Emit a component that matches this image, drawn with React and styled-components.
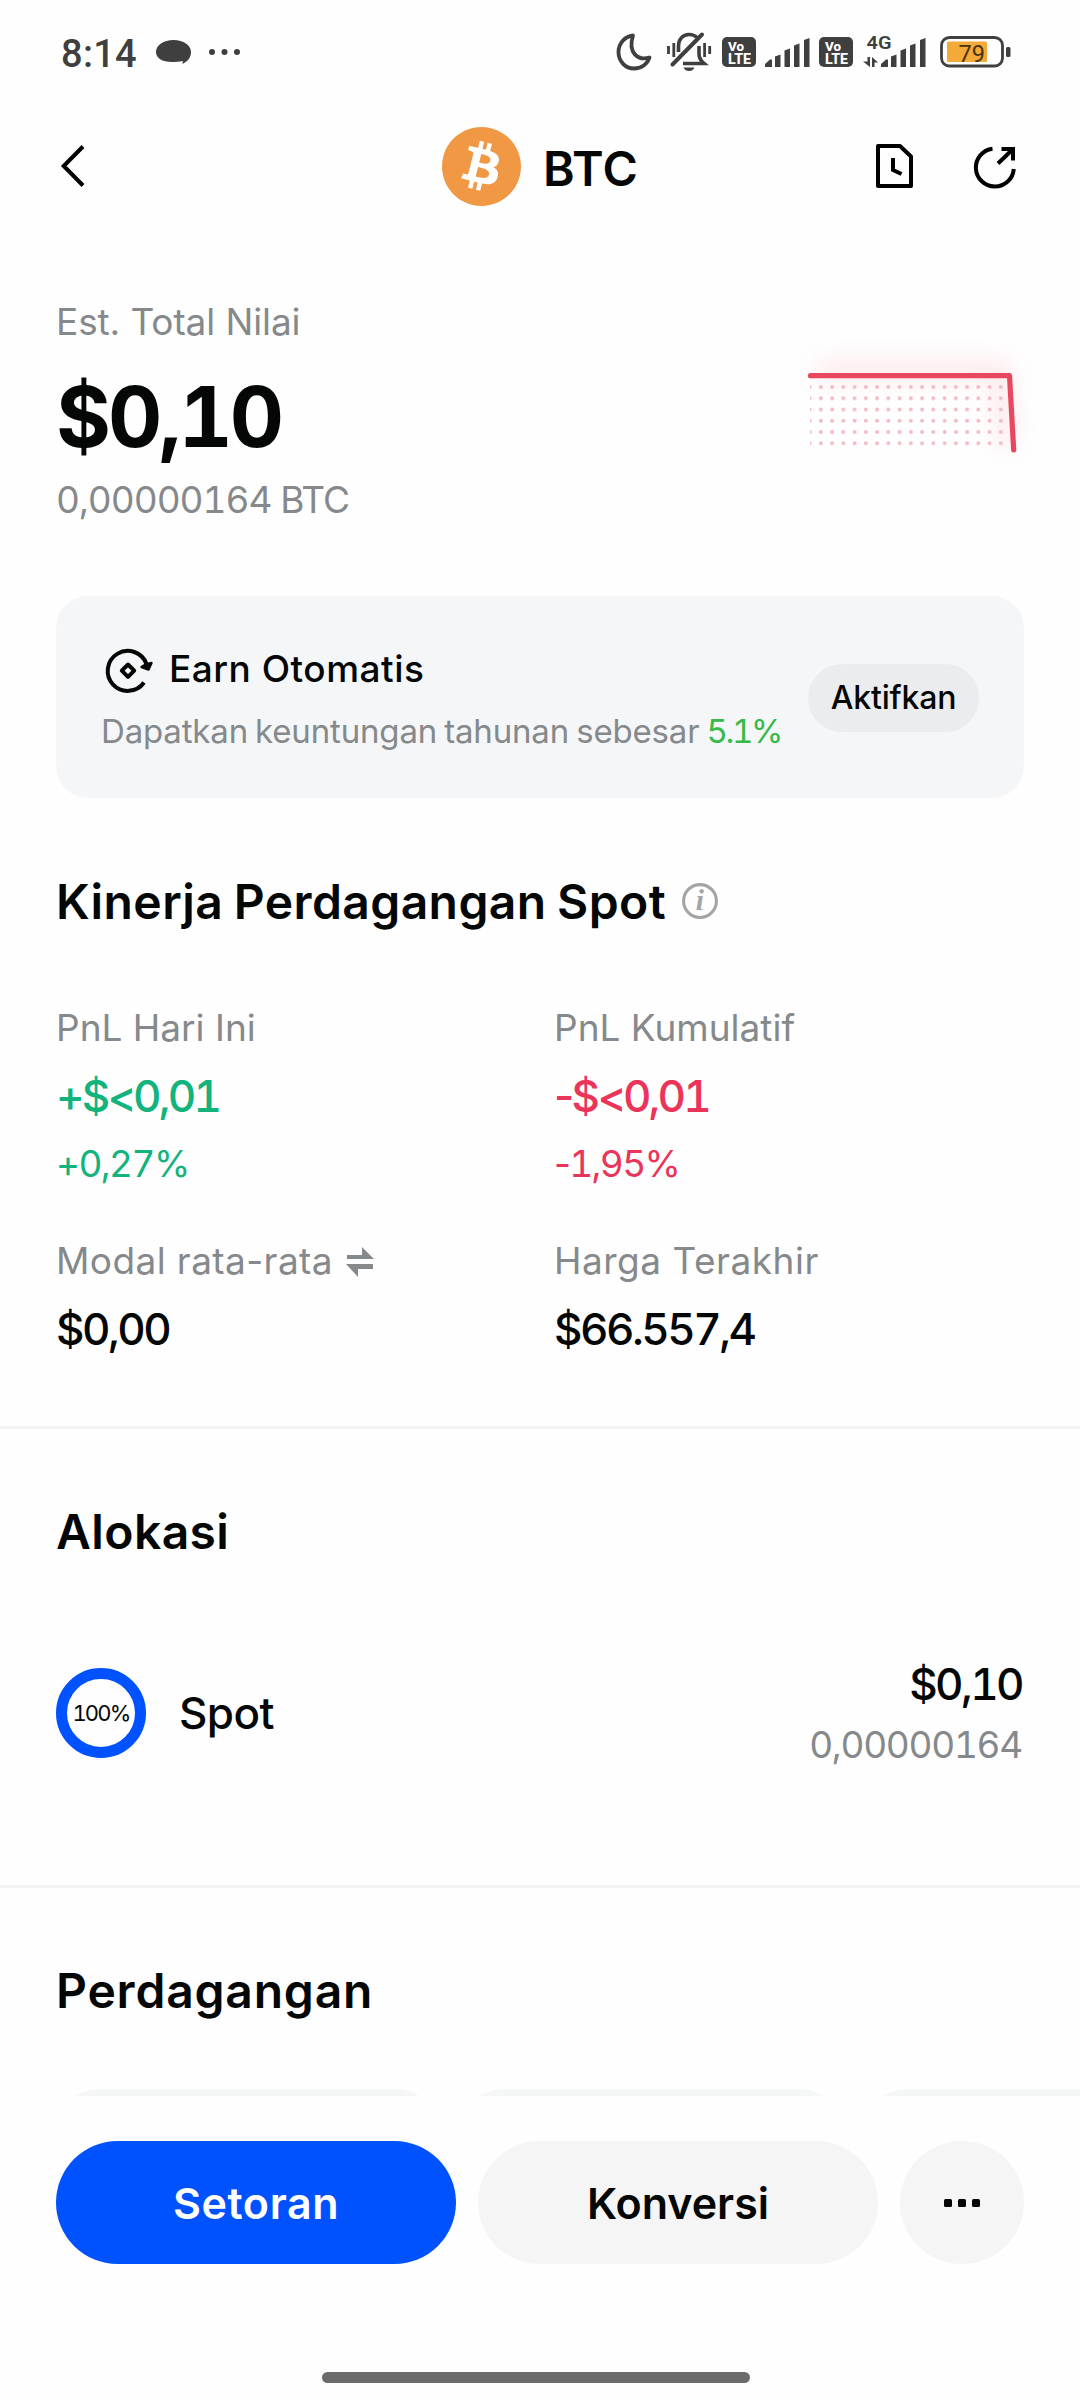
import React from "react";
import styled, { createGlobalStyle } from "styled-components";
import { SiBitcoin } from "react-icons/si";

const colors = {
  text: "#050707",
  muted: "#86898b",
  status: "#3f3f3f",
  up: "#12b37c",
  down: "#ea3459",
  blue: "#0052ff",
  line: "#f3f3f3",
  pill: "#f5f5f5"
};

const GlobalStyle = createGlobalStyle`
  * {
    box-sizing: border-box;
  }

  body {
    margin: 0;
    background: #fefefe;
    color: ${colors.text};
    font-family: Inter, "Liberation Sans", sans-serif;
  }

  svg {
    display: block;
    flex: none;
    overflow: visible;
  }

  button {
    padding: 0;
    border: none;
    background: none;
    color: inherit;
    font: inherit;
    cursor: pointer;
  }
`;

const Screen = styled.div`
  display: flex;
  flex-direction: column;
  width: 1080px;
  height: 2400px;
  overflow: hidden;
`;

const StatusBar = styled.div`
  display: flex;
  align-items: center;
  justify-content: space-between;
  flex: none;
  height: 104px;
  padding: 0 69px 0 61px;
  font-family: Roboto, sans-serif;
  color: ${colors.status};
`;

const StatusGroup = styled.div`
  display: flex;
  align-items: center;
`;

const StatusItem = styled.div`
  margin-left: ${props => props.$gap}px;
`;

const Clock = styled.span`
  font-size: 38px;
  font-weight: 500;
  line-height: 44px;
  letter-spacing: 0.3px;
  padding-top: 3px;
`;

const Header = styled.header`
  display: grid;
  grid-template-columns: 1fr auto 1fr;
  align-items: center;
  flex: none;
  height: 124px;
  padding: 0 64px 0 61px;
`;

const HeaderTitle = styled.div`
  display: flex;
  align-items: center;
  gap: 22px;
  padding-left: 3px;
`;

const CoinName = styled.span`
  padding-top: 5px;
  font-size: 48px;
  font-weight: 600;
  line-height: 60px;
  letter-spacing: 0.2px;
`;

const CoinLogo = styled(SiBitcoin)`
  width: 79px;
  height: 79px;
  border-radius: 50%;
  color: #f09843;
`;

const HeaderActions = styled.div`
  display: flex;
  align-items: center;
  justify-content: flex-end;
  gap: 61px;
`;

const IconButton = styled.button`
  display: flex;
  justify-self: start;
`;

const Body = styled.main`
  flex: 1;
  min-height: 0;
  overflow: hidden;
`;

const Section = styled.section`
  padding: ${props => props.$top}px 56px ${props => props.$bottom || 0}px;
`;

const Divider = styled.div`
  height: 3px;
  background: ${colors.line};
`;

const Label = styled.div`
  display: flex;
  align-items: center;
  gap: 13px;
  font-size: 37px;
  line-height: 50px;
  letter-spacing: ${props => props.$spacing || 0}px;
  color: ${colors.muted};
`;

const Value = styled.div`
  font-size: 44px;
  font-weight: 500;
  line-height: 56px;
  letter-spacing: ${props => props.$spacing || 0}px;
  font-variant-numeric: tabular-nums;
  color: ${props => props.$color || colors.text};
`;

const SmallValue = styled.div`
  font-size: 37px;
  line-height: 50px;
  letter-spacing: ${props => props.$spacing}px;
  font-variant-numeric: tabular-nums;
  color: ${props => props.$color || colors.muted};
`;

const Sign = styled.span`
  font-variant-numeric: normal;
`;

const Title = styled.h2`
  display: flex;
  align-items: center;
  gap: 15px;
  margin: ${props => props.$top || 0}px 0 0;
  font-size: 48px;
  font-weight: 600;
  line-height: 64px;
  letter-spacing: ${props => props.$spacing}px;
  word-spacing: -2px;
`;

const Balance = styled.div`
  display: flex;
  justify-content: space-between;
  align-items: flex-start;
`;

const BalanceAmount = styled.div`
  margin: 20px 0 8px;
  font-size: 84px;
  font-weight: 700;
  line-height: 100px;
  letter-spacing: -3.1px;
  font-variant-numeric: tabular-nums;
`;

const ChartBox = styled.div`
  margin-top: 28px;
`;

const EarnCard = styled.div`
  display: flex;
  align-items: flex-start;
  justify-content: space-between;
  height: 202px;
  margin-top: 71px;
  padding: 48px 45px 0;
  border-radius: 32px;
  background: #f4f6f8;
`;

const EarnTitle = styled.div`
  display: flex;
  align-items: center;
  gap: 12px;
  font-size: 37px;
  font-weight: 500;
  line-height: 50px;
  letter-spacing: 0.5px;
`;

const EarnText = styled.div`
  margin-top: 14px;
  font-size: 33px;
  line-height: 46px;
  letter-spacing: -0.17px;
  word-spacing: -2px;
  white-space: nowrap;
  color: ${colors.muted};
`;

const Rate = styled.span`
  color: #36b948;
  letter-spacing: -2.4px;
  font-variant-numeric: tabular-nums;
`;

const EnableButton = styled.button`
  width: 171px;
  height: 68px;
  margin-top: 20px;
  padding-bottom: 1px;
  border-radius: 34px;
  background: #ebecee;
  font-size: 32px;
  font-weight: 500;
  letter-spacing: -0.2px;
`;

const Stats = styled.div`
  display: grid;
  grid-template-columns: 498px 1fr;
  row-gap: 47px;
  margin-top: 69px;
`;

const Stat = styled.div`
  display: flex;
  flex-direction: column;
  gap: 15px;
`;

const Allocation = styled.div`
  display: flex;
  align-items: center;
  height: 114px;
  margin-top: 92px;
`;

const Ring = styled.div`
  display: flex;
  align-items: center;
  justify-content: center;
  width: 90px;
  height: 90px;
  margin-right: 33px;
  border: 11px solid ${colors.blue};
  border-radius: 50%;
  font-size: 22px;
  letter-spacing: -1.8px;
  font-variant-numeric: tabular-nums;
`;

const AllocationAmount = styled.div`
  display: flex;
  flex-direction: column;
  align-items: flex-end;
  gap: 8px;
  margin-left: auto;
  padding-right: 2px;
`;

const TradeCards = styled.div`
  display: flex;
  gap: 21px;
  margin-top: 66px;
`;

const TradeCard = styled.div`
  flex: none;
  width: 383px;
  height: 180px;
  border-radius: 44px;
  background: #f5f7f7;
`;

const Footer = styled.footer`
  flex: none;
  height: 304px;
  padding: 45px 56px 0;
`;

const FooterActions = styled.div`
  display: flex;
  gap: 22px;
`;

const FooterButton = styled.button`
  display: flex;
  align-items: center;
  justify-content: center;
  flex: ${props => (props.$round ? "none" : 1)};
  width: ${props => (props.$round ? "124px" : "auto")};
  height: 123px;
  border-radius: 62px;
  background: ${props => (props.$primary ? colors.blue : colors.pill)};
  color: ${props => (props.$primary ? "#fff" : colors.text)};
  font-size: 43px;
  font-weight: 600;
  letter-spacing: ${props => props.$spacing || 0}px;
`;

const HomeBar = styled.div`
  width: 428px;
  height: 11px;
  margin: 108px 0 0 266px;
  border-radius: 6px;
  background: #6b6b6b;
`;

function BubbleIcon() {
  return (
    <svg width="35" height="24" viewBox="0 0 35 24" fill={colors.status}>
      <path d="M17.500 0C27.500 0 35 5 35 12c0 5-2.500 9-8.500 12l.300-3C23 21.800 20 22 16 22 6 22 0 18 0 12 0 5 7.500 0 17.500 0Z" />
    </svg>
  );
}

function DotsIcon() {
  return (
    <svg width="32" height="6" viewBox="0 0 32 6" fill={colors.status}>
      <circle cx="3" cy="3" r="3" />
      <circle cx="15.500" cy="3" r="3" />
      <circle cx="28" cy="3" r="3" />
    </svg>
  );
}

function MoonIcon() {
  return (
    <svg width="36" height="38" viewBox="0 0 36 38" fill="none" stroke={colors.status} strokeWidth="3.800" strokeLinejoin="round">
      <path d="M17 2.500C8.500 3.500 2.500 10.500 2.500 19c0 9.500 7 16.500 15.500 16.500 7.500 0 13.500-4.500 15.500-11C22 28 11.500 20 17 2.500Z" />
    </svg>
  );
}

function MutedBellIcon() {
  return (
    <svg width="46" height="40" viewBox="0 0 46 40" fill="none" stroke={colors.status} strokeWidth="3.600">
      <path d="M2.500 14v8M7.800 11v14M38.600 11v14M43.700 14v8" strokeWidth="2.800" />
      <path d="M12.500 20V14C12.500 7 17 2.500 23 2.500c3.500 0 6 1 8 3" />
      <path d="M33 14v8c0 4 2 7 5 9.500H17" />
      <path d="M6.500 32.500 36 2.500" strokeWidth="4" strokeLinecap="round" />
      <path d="M17.500 35.500h11c-1 2.500-3 3.500-5.500 3.500s-4.500-1-5.500-3.500Z" fill={colors.status} stroke="none" />
    </svg>
  );
}

function VolteIcon() {
  return (
    <svg width="34" height="30" viewBox="0 0 34 30">
      <rect width="34" height="30" rx="5" fill={colors.status} />
      <g fill="#fff" fontFamily="Roboto, sans-serif" fontWeight="800">
        <text x="6" y="13.500" fontSize="13" textLength="16" lengthAdjust="spacingAndGlyphs">Vo</text>
        <text x="6" y="26.500" fontSize="14" textLength="23" lengthAdjust="spacingAndGlyphs">LTE</text>
      </g>
    </svg>
  );
}

function SignalBars() {
  return (
    <g fill={colors.status}>
      <path d="M0 29v-3l5-4.500h2V29Z" />
      <path d="M10 29V18.500l5.500-2V29Z" />
      <path d="M19.500 29V12.500l5.500-2V29Z" />
      <path d="M29 29V7.500l5.500-2V29Z" />
      <path d="M39 29V2l5.500-2v29Z" />
    </g>
  );
}

function SignalIcon() {
  return (
    <svg width="45" height="29" viewBox="0 0 45 29">
      <SignalBars />
    </svg>
  );
}

function DataSignalIcon() {
  return (
    <svg width="63" height="29" viewBox="0 0 63 29" fill={colors.status}>
      <text x="3.500" y="10.500" fontFamily="Roboto, sans-serif" fontSize="19" fontWeight="600" textLength="25" lengthAdjust="spacingAndGlyphs">4G</text>
      <path d="M4.500 19H7v10L0 23.500h4.500ZM9 19l6 5.500h-3.500V29H9Z" />
      <g transform="translate(18 0)">
        <SignalBars />
      </g>
    </svg>
  );
}

function BatteryIcon() {
  return (
    <svg width="71" height="32" viewBox="0 0 71 32">
      <rect x="1.500" y="1.500" width="61" height="28.500" rx="8" fill="none" stroke={colors.status} strokeWidth="2.800" />
      <rect x="7" y="5.500" width="40" height="20.500" rx="1.500" fill="#f3aa38" />
      <rect x="66" y="11" width="4.500" height="10" rx="1.500" fill={colors.status} />
      <text x="18.500" y="25.500" fontFamily="Roboto, sans-serif" fontSize="23.500" fill="#4a3210" textLength="26.500">79</text>
    </svg>
  );
}

function BackIcon() {
  return (
    <svg width="24" height="42" viewBox="0 0 24 42" fill="none" stroke="#000" strokeWidth="4">
      <path d="M22 1.500 2.700 21 22 40.500" />
    </svg>
  );
}

function HistoryIcon() {
  return (
    <svg width="37" height="44" viewBox="0 0 37 44" fill="none" stroke="#000" strokeWidth="4" strokeLinejoin="round">
      <path d="M2 2h22l11 10.500V42H2Z" />
      <path d="M17 14v12l8.500 4" strokeLinejoin="miter" />
    </svg>
  );
}

function ShareIcon() {
  return (
    <svg width="42" height="42" viewBox="0 0 42 42" fill="none" stroke="#000" strokeWidth="4">
      <path d="M18.500 3.700A19 19 0 1 0 39.800 24" />
      <path d="M24 18.500 38.500 4.500" />
      <path d="M27.500 4H39v11.500" />
    </svg>
  );
}

function EarnIcon() {
  return (
    <svg width="56" height="50" viewBox="0 0 56 50" fill="none" stroke={colors.text} strokeWidth="4">
      <path d="M43 38.500A20 20 0 1 1 45.500 20" />
      <path d="m40.500 23 4-2.500 6-1.500-3 6.500Z" fill={colors.text} strokeWidth="2.400" strokeLinejoin="round" />
      <path d="m27 20.500 6.200 6.200-6.200 6.200-6.200-6.200Z" strokeLinejoin="round" />
    </svg>
  );
}

function InfoIcon() {
  return (
    <svg width="38" height="38" viewBox="0 0 38 40">
      <circle cx="19" cy="19" r="17.300" fill="none" stroke="#a3a4a5" strokeWidth="3.200" />
      <text x="19" y="28.500" textAnchor="middle" fontFamily="'Liberation Serif', serif" fontStyle="italic" fontWeight="700" fontSize="31" fill="#a3a4a5">i</text>
    </svg>
  );
}

function SwapIcon() {
  return (
    <svg width="28" height="33" viewBox="0 0 28 29" fill={colors.muted}>
      <path d="M1 8h15V0l12 12H1Z" />
      <path d="M27 17v5H12v8L0 17Z" />
    </svg>
  );
}

function MoreIcon() {
  return (
    <svg width="36" height="8" viewBox="0 0 36 8" fill={colors.text}>
      <rect width="8" height="8" rx="1.500" />
      <rect x="14" width="8" height="8" rx="1.500" />
      <rect x="28" width="8" height="8" rx="1.500" />
    </svg>
  );
}

function TrendChart() {
  return (
    <svg width="215" height="126" viewBox="0 0 215 126">
      <defs>
        <pattern id="dots" x="-5" y="56.500" width="11.250" height="11.250" patternUnits="userSpaceOnUse">
          <circle cx="5.600" cy="5.600" r="2" fill="#f3bcc5" />
        </pattern>
        <filter id="glow" x="-20%" y="-80%" width="140%" height="260%">
          <feGaussianBlur stdDeviation="12" />
        </filter>
      </defs>
      <path d="M8 46H192L198 120" fill="none" stroke="#f7808e" strokeWidth="14" opacity="0.24" filter="url(#glow)" />
      <rect x="1" y="56.500" width="196" height="67.500" fill="url(#dots)" />
      <path d="M1.500 50.700H200.500L204.700 125" fill="none" stroke="#e94660" strokeWidth="5.200" strokeLinecap="round" strokeLinejoin="round" />
    </svg>
  );
}

function App() {
  return (
    <Screen>
      <GlobalStyle />
      <StatusBar>
        <StatusGroup>
          <Clock>8:14</Clock>
          <StatusItem $gap={19}><BubbleIcon /></StatusItem>
          <StatusItem $gap={18}><DotsIcon /></StatusItem>
        </StatusGroup>
        <StatusGroup>
          <MoonIcon />
          <StatusItem $gap={14}><MutedBellIcon /></StatusItem>
          <StatusItem $gap={10}><VolteIcon /></StatusItem>
          <StatusItem $gap={9}><SignalIcon /></StatusItem>
          <StatusItem $gap={9}><VolteIcon /></StatusItem>
          <StatusItem $gap={10}><DataSignalIcon /></StatusItem>
          <StatusItem $gap={14}><BatteryIcon /></StatusItem>
        </StatusGroup>
      </StatusBar>

      <Header>
        <IconButton><BackIcon /></IconButton>
        <HeaderTitle>
          <CoinLogo />
          <CoinName>BTC</CoinName>
        </HeaderTitle>
        <HeaderActions>
          <IconButton><HistoryIcon /></IconButton>
          <IconButton><ShareIcon /></IconButton>
        </HeaderActions>
      </Header>

      <Body>
        <Section $top={69} $bottom={69}>
          <Balance>
            <div>
              <Label $spacing={-0.1}>Est. Total Nilai</Label>
              <BalanceAmount>$0,10</BalanceAmount>
              <SmallValue $spacing={-1.05}>0,00000164 BTC</SmallValue>
            </div>
            <ChartBox>
              <TrendChart />
            </ChartBox>
          </Balance>

          <EarnCard>
            <div>
              <EarnTitle>
                <EarnIcon />
                Earn Otomatis
              </EarnTitle>
              <EarnText>
                Dapatkan keuntungan tahunan sebesar <Rate>5.1%</Rate>
              </EarnText>
            </div>
            <EnableButton>Aktifkan</EnableButton>
          </EarnCard>

          <Title $top={72} $spacing={0.4}>
            Kinerja Perdagangan Spot
            <InfoIcon />
          </Title>
          <Stats>
            <Stat>
              <Label>PnL Hari Ini</Label>
              <Value $color={colors.up} $spacing={-2.8}>+$&lt;0,01</Value>
              <SmallValue $color={colors.up} $spacing={-1.6}>+0,27%</SmallValue>
            </Stat>
            <Stat>
              <Label>PnL Kumulatif</Label>
              <Value $color={colors.down} $spacing={-2.8}><Sign>-</Sign>$&lt;0,01</Value>
              <SmallValue $color={colors.down} $spacing={-1.7}><Sign>-</Sign>1,95%</SmallValue>
            </Stat>
            <Stat>
              <Label $spacing={0.4}>
                Modal rata-rata
                <SwapIcon />
              </Label>
              <Value $spacing={-2.5}>$0,00</Value>
            </Stat>
            <Stat>
              <Label $spacing={0.5}>Harga Terakhir</Label>
              <Value $spacing={-2.5}>$66.557,4</Value>
            </Stat>
          </Stats>
        </Section>
        <Divider />

        <Section $top={71} $bottom={115}>
          <Title $spacing={0.4}>Alokasi</Title>
          <Allocation>
            <Ring>100%</Ring>
            <Value $spacing={-0.6}>Spot</Value>
            <AllocationAmount>
              <Value $spacing={-2.6}>$0,10</Value>
              <SmallValue $spacing={-1.3}>0,00000164</SmallValue>
            </AllocationAmount>
          </Allocation>
        </Section>
        <Divider />

        <Section $top={71}>
          <Title $spacing={0.8}>Perdagangan</Title>
          <TradeCards>
            <TradeCard />
            <TradeCard />
            <TradeCard />
          </TradeCards>
        </Section>
      </Body>

      <Footer>
        <FooterActions>
          <FooterButton $primary $spacing={0.6}>Setoran</FooterButton>
          <FooterButton>Konversi</FooterButton>
          <FooterButton $round><MoreIcon /></FooterButton>
        </FooterActions>
        <HomeBar />
      </Footer>
    </Screen>
  );
}

export default App;
